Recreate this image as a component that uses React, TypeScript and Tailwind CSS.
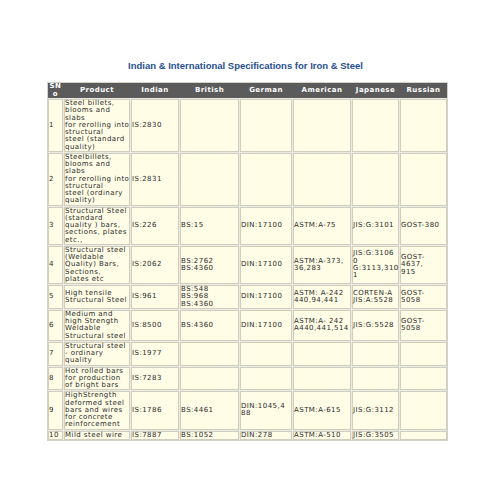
type Row = {
  sn: string
  product: string[]
  indian: string[]
  british: string[]
  german: string[]
  american: string[]
  japanese: string[]
  russian: string[]
}

const rows: Row[] = [
  {
    sn: '1',
    product: ['Steel billets,', 'blooms and', 'slabs', 'for rerolling into', 'structural', 'steel (standard', 'quality)'],
    indian: ['IS:2830'], british: [], german: [], american: [], japanese: [], russian: [],
  },
  {
    sn: '2',
    product: ['Steelbillets,', 'blooms and', 'slabs', 'for rerolling into', 'structural', 'steel (ordinary', 'quality)'],
    indian: ['IS:2831'], british: [], german: [], american: [], japanese: [], russian: [],
  },
  {
    sn: '3',
    product: ['Structural Steel', '(standard', 'quality ) bars,', 'sections, plates', 'etc.,'],
    indian: ['IS:226'], british: ['BS:15'], german: ['DIN:17100'], american: ['ASTM:A-75'],
    japanese: ['JIS:G:3101'], russian: ['GOST-380'],
  },
  {
    sn: '4',
    product: ['Structural steel', '(Weldable', 'Quality) Bars,', 'Sections,', 'plates etc'],
    indian: ['IS:2062'], british: ['BS:2762', 'BS:4360'], german: ['DIN:17100'],
    american: ['ASTM:A-373,', '36,283'], japanese: ['JIS:G:3106', '0', 'G:3113,310', '1'],
    russian: ['GOST-', '4637,', '915'],
  },
  {
    sn: '5',
    product: ['High tensile', 'Structural Steel'],
    indian: ['IS:961'], british: ['BS:548', 'BS:968', 'BS:4360'], german: ['DIN:17100'],
    american: ['ASTM: A-242', '440,94,441'], japanese: ['CORTEN-A', 'JIS:A:5528'],
    russian: ['GOST-', '5058'],
  },
  {
    sn: '6',
    product: ['Medium and', 'high Strength', 'Weldable', 'Structural steel'],
    indian: ['IS:8500'], british: ['BS:4360'], german: ['DIN:17100'],
    american: ['ASTM:A- 242', 'A440,441,514'], japanese: ['JIS:G:5528'], russian: ['GOST-', '5058'],
  },
  {
    sn: '7',
    product: ['Structural steel', '- ordinary', 'quality'],
    indian: ['IS:1977'], british: [], german: [], american: [], japanese: [], russian: [],
  },
  {
    sn: '8',
    product: ['Hot rolled bars', 'for production', 'of bright bars'],
    indian: ['IS:7283'], british: [], german: [], american: [], japanese: [], russian: [],
  },
  {
    sn: '9',
    product: ['HighStrength', 'deformed steel', 'bars and wires', 'for concrete', 'reinforcement'],
    indian: ['IS:1786'], british: ['BS:4461'], german: ['DIN:1045,4', '88'],
    american: ['ASTM:A-615'], japanese: ['JIS:G:3112'], russian: [],
  },
  {
    sn: '10',
    product: ['Mild steel wire'],
    indian: ['IS:7887'], british: ['BS:1052'], german: ['DIN:278'], american: ['ASTM:A-510'],
    japanese: ['JIS:G:3505'], russian: [],
  },
]

const headers = ['SN o', 'Product', 'Indian', 'British', 'German', 'American', 'Japanese', 'Russian']

function Cell({ lines }: { lines: string[] }) {
  return (
    <div className="flex items-center border border-[#cfcebf] bg-[#fffde6] text-[#2b2b2b]">
      <div className="whitespace-nowrap">
        {lines.map((l, i) => (
          <div key={i}>{l}</div>
        ))}
      </div>
    </div>
  )
}

export default function App() {
  return (
    <div className="min-h-screen bg-white flex flex-col items-center pt-[60px]">
      {/* Title */}
      <h1 className="text-[9.5px] leading-[12px] font-bold text-[#1f4f8f] font-['Liberation_Sans',Arial,sans-serif] ml-[-4px]">
        Indian &amp; International Specifications for Iron &amp; Steel
      </h1>

      {/* Table */}
      <div className="mt-[10px] w-[401px] border border-[#d3d2c5] bg-[#ecebe2] font-['DejaVu_Sans',Verdana,sans-serif] text-[7px] leading-[7.25px] tracking-[0.45px]">
        <div className="grid grid-cols-[15px_66px_48px_59px_52px_58px_47px_47px] gap-x-[1px] bg-[#5b5b5b] mb-[1px]">
          {headers.map((h) => (
            <div key={h} className="h-[15px] flex items-center justify-center text-center font-bold text-white">
              {h === 'SN o' ? (
                <div>
                  <div>SN</div>
                  <div>o</div>
                </div>
              ) : (
                h
              )}
            </div>
          ))}
        </div>
        <div className="grid grid-cols-[15px_66px_48px_59px_52px_58px_47px_47px] gap-[1px]">
          {rows.map((r) => (
            <>
              <Cell key={r.sn + 'sn'} lines={[r.sn]} />
              <Cell key={r.sn + 'p'} lines={r.product} />
              <Cell key={r.sn + 'i'} lines={r.indian} />
              <Cell key={r.sn + 'b'} lines={r.british} />
              <Cell key={r.sn + 'g'} lines={r.german} />
              <Cell key={r.sn + 'a'} lines={r.american} />
              <Cell key={r.sn + 'j'} lines={r.japanese} />
              <Cell key={r.sn + 'r'} lines={r.russian} />
            </>
          ))}
        </div>
      </div>
    </div>
  )
}
